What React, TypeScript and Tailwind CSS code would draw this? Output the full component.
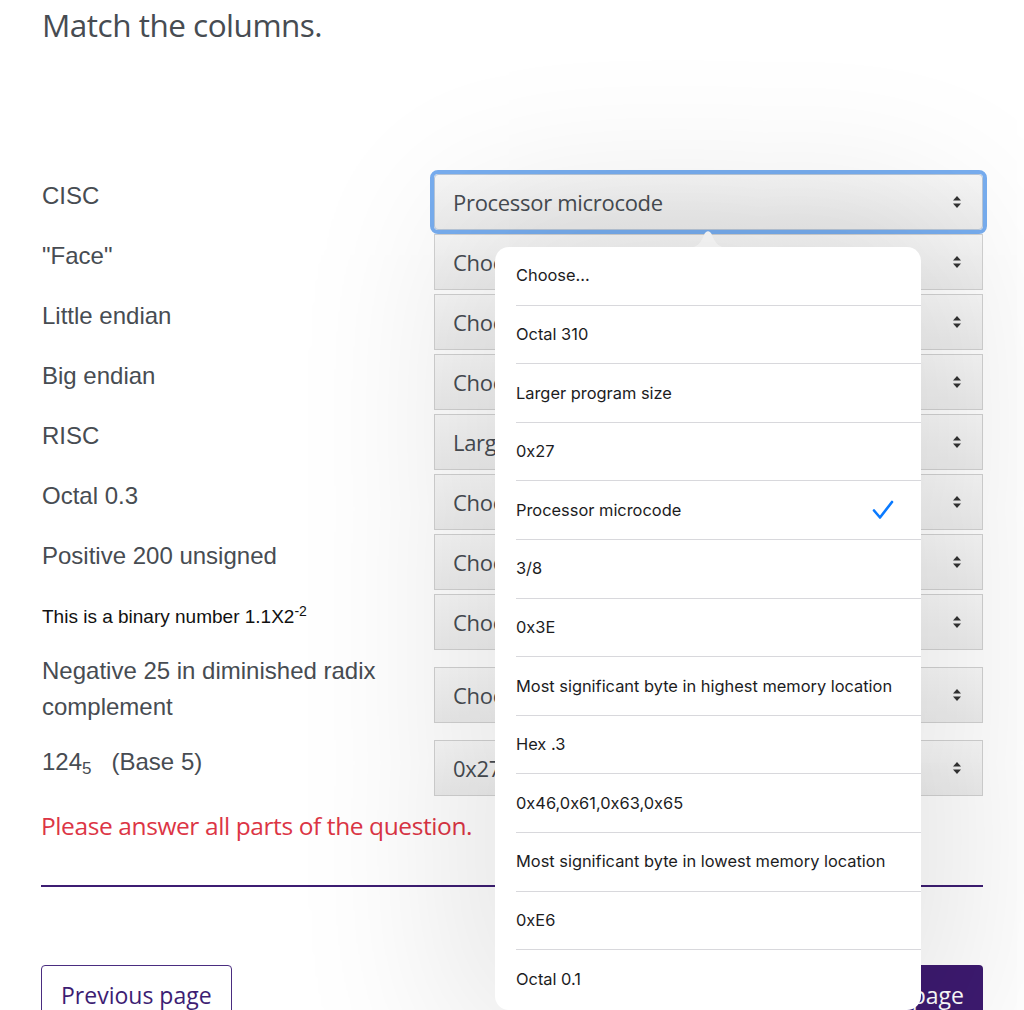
import React from 'react';

const rows: { label: React.ReactNode; value: string }[] = [
  { label: 'CISC', value: 'Processor microcode' },
  { label: '"Face"', value: 'Choose...' },
  { label: 'Little endian', value: 'Choose...' },
  { label: 'Big endian', value: 'Choose...' },
  { label: 'RISC', value: 'Larger program size' },
  { label: 'Octal 0.3', value: 'Choose...' },
  { label: 'Positive 200 unsigned', value: 'Choose...' },
  {
    label: (
      <span className="text-[19px] text-[#111]">
        This is a binary number 1.1X2<sup className="text-[14px]">-2</sup>
      </span>
    ),
    value: 'Choose...',
  },
  { label: <>Negative 25 in diminished radix<br />complement</>, value: 'Choose...' },
  {
    label: (
      <>
        124<sub className="text-[17px]">5</sub>&nbsp;&nbsp;&nbsp;(Base 5)
      </>
    ),
    value: '0x27',
  },
];

const options = [
  'Choose...',
  'Octal 310',
  'Larger program size',
  '0x27',
  'Processor microcode',
  '3/8',
  '0x3E',
  'Most significant byte in highest memory location',
  'Hex .3',
  '0x46,0x61,0x63,0x65',
  'Most significant byte in lowest memory location',
  '0xE6',
  'Octal 0.1',
];

function UpDown() {
  return (
    <svg width="10" height="14" viewBox="0 0 10 14" className="shrink-0">
      <path d="M5 1 L9 5.5 H1 Z" fill="#333" />
      <path d="M5 13 L9 8.5 H1 Z" fill="#333" />
    </svg>
  );
}

function SelectBox({ value, focused }: { value: string; focused?: boolean }) {
  return (
    <div
      className={`flex-1 h-[56px] flex items-center justify-between pl-[18px] pr-[20px] bg-gradient-to-b from-[#f8f8f8] to-[#ededed] text-[22px] text-[#474c52] font-['Open_Sans',sans-serif] ${
        focused ? 'border border-[#b9c7d8] outline-4 outline-[#78aef0] rounded-[4px]' : 'border border-[#d2d2d2]'
      }`}
    >
      <span className="tracking-[-0.3px]">{value}</span>
      <UpDown />
    </div>
  );
}

export default function App() {
  return (
    <div className="relative w-[1024px] h-[1010px] overflow-hidden bg-white">
      <div className="px-[41px]">
        <h1 className="text-[31.5px] leading-[50px] text-[#474c52] font-['Open_Sans',sans-serif] tracking-[-0.5px] pl-[1px]">
          Match the columns.
        </h1>

        <div className="mt-[124px] flex flex-col gap-[4px]">
          {rows.map((r, i) => (
            <div key={i} className={`flex items-center ${i === 8 ? '-mt-[1px]' : ''} ${i === 9 ? '-mt-[1px]' : ''}`}>
              <div className="w-[393px] pl-[1px] pb-[12px] text-[24px] leading-[36px] text-[#474c52] font-['Liberation_Sans',sans-serif]">
                {r.label}
              </div>
              <SelectBox value={r.value} focused={i === 0} />
            </div>
          ))}
        </div>

        <p className="mt-[12px] text-[24.5px] leading-[36px] text-[#dc3545] font-['Open_Sans',sans-serif] tracking-[-0.4px]">
          Please answer all parts of the question.
        </p>

        <div className="mt-[41px] h-[2px] bg-[#3d1d73]" />

        <div className="mt-[78px] flex justify-between">
          <button className="h-[60px] px-[19px] border border-[#4a2d80] rounded-[4px] text-[23px] text-[#3d1d73] font-['Open_Sans',sans-serif]">
            Previous page
          </button>
          <button className="h-[60px] px-[19px] rounded-[4px] bg-[#3d1a70] text-[23px] text-white font-['Open_Sans',sans-serif]">
            Next page
          </button>
        </div>
      </div>

      {/* popover pointer */}
      <svg
        className="absolute left-[686px] top-[229px]"
        width="44"
        height="20"
        viewBox="0 0 44 20"
      >
        <path d="M0 19 C10 19 14 16 18 6 C20 1 24 1 26 6 C30 16 34 19 44 19 Z" fill="#fff" />
      </svg>

      {/* options popover */}
      <div className="absolute left-[495px] top-[247px] w-[426px] h-[763px] bg-white rounded-[14px] shadow-[0_0_170px_40px_rgba(0,0,0,0.11)] overflow-hidden font-['Inter',sans-serif]">
        {options.map((o, i) => (
          <div key={i} className="h-[58.6px] pl-[21px] flex flex-col">
            <div
              className={`flex-1 flex items-center justify-between pr-[27px] text-[16.4px] text-[#1c1c1e] ${
                i < options.length - 1 ? 'border-b border-[#d8d8dc]' : ''
              }`}
            >
              <span>{o}</span>
              {o === 'Processor microcode' && (
                <svg width="22" height="20" viewBox="0 0 22 20">
                  <path d="M2 10.5 L8 17.5 L20 2" fill="none" stroke="#0a7aff" strokeWidth="2.6" strokeLinecap="round" strokeLinejoin="round" />
                </svg>
              )}
            </div>
          </div>
        ))}
      </div>
    </div>
  );
}
